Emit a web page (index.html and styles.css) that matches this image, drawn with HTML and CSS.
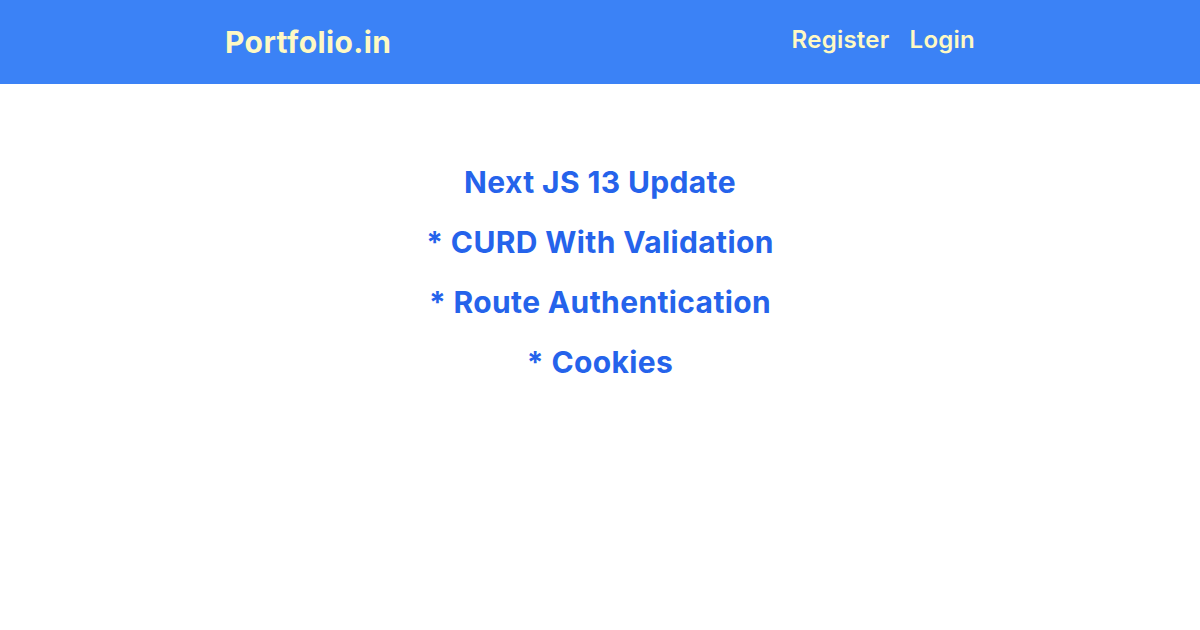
FILE: index.html
```html
<!DOCTYPE html>
<html>
<head>
<meta charset="utf-8">
<link rel="stylesheet" href="styles.css">
</head>
<body>
<header class="nav">
  <div class="nav-inner">
    <a class="logo">Portfolio.in</a>
    <nav class="links">
      <a class="link">Register</a>
      <a class="link">Login</a>
    </nav>
  </div>
</header>
<main class="content">
  <h1 class="line">Next JS 13 Update</h1>
  <h1 class="line">* CURD With Validation</h1>
  <h1 class="line">* Route Authentication</h1>
  <h1 class="line">* Cookies</h1>
</main>
</body>
</html>
```
FILE: styles.css
```css
* { box-sizing: border-box; }
html, body { margin: 0; padding: 0; }
body { font-family: Inter, "Noto Sans", sans-serif; background: #fff; width: 1200px; height: 630px; }
.nav { background: #3b82f6; height: 84px; }
.nav-inner { width: 750px; margin: 0 auto; height: 84px; display: flex; align-items: center; justify-content: space-between; }
.logo { color: #fef9c3; font-size: 30px; font-weight: 700; line-height: 36px; letter-spacing: 0.4px; }
.links { display: flex; gap: 20px; margin-top: -4px; }
.link { color: #fef9c3; font-size: 24px; font-weight: 600; line-height: 32px; letter-spacing: 0.25px; }
.content { padding-top: 68px; text-align: center; }
.line { margin: 0; color: #2563eb; font-size: 30px; font-weight: 700; line-height: 60px; letter-spacing: 0.37px; }
```
